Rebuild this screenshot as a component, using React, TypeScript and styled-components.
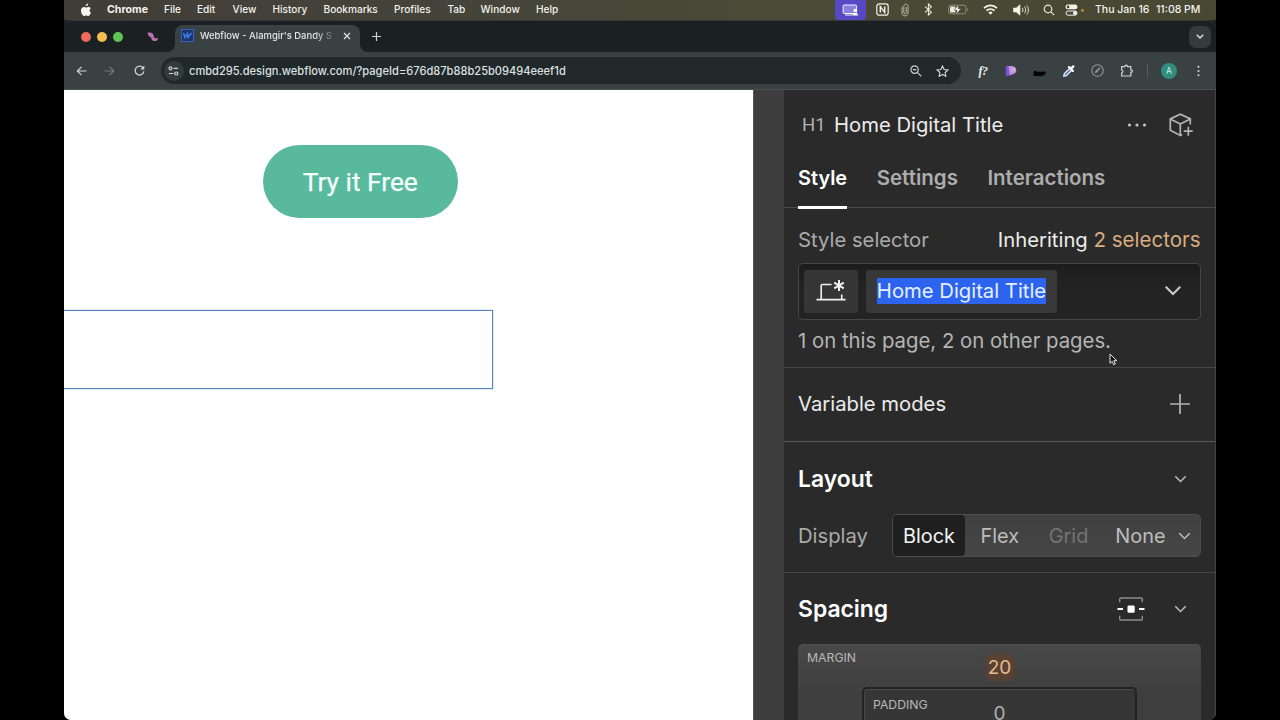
import React from "react";
import styled, { createGlobalStyle, css } from "styled-components";

const Global = createGlobalStyle`
  * { box-sizing: border-box; }
  html, body { margin: 0; background: #000; }
  body { font-family: Inter, "Liberation Sans", sans-serif; overflow: hidden; }
  svg { display: block; flex: none; }
`;

const Screen = styled.main`
  position: relative;
  width: 1152px;
  height: 720px;
  margin: 0 auto;
  display: flex;
  flex-direction: column;
  background: #1b2123;
  border-radius: 0 0 7px 7px;
  overflow: hidden;
`;

/* ---------- macOS menu bar ---------- */

const MenuBar = styled.header`
  flex: none;
  height: 20px;
  display: flex;
  align-items: flex-start;
  padding-left: 15.5px;
  background: linear-gradient(90deg, #403d37 0%, #45443a 35%, #4a4a37 60%, #474732 100%);
  color: #f2f2ec;
  font-size: 10.1px;
  font-weight: 500;
  line-height: 18px;
  white-space: nowrap;
`;

const MenuItem = styled.span<{ $w: number; $app?: boolean }>`
  flex: none;
  width: ${(p) => p.$w}px;
  height: 19px;
  ${(p) =>
    p.$app &&
    css`
      font-weight: 700;
      font-size: 10.6px;
      line-height: 19px;
    `}
`;

const Spacer = styled.div`
  flex: 1;
`;

const Slot = styled.span<{ $w: number; $ml?: number }>`
  flex: none;
  width: ${(p) => p.$w}px;
  height: 19px;
  margin-left: ${(p) => p.$ml ?? 0}px;
  display: flex;
  align-items: center;
  justify-content: center;
`;

const ShareBadge = styled(Slot)`
  background: #5748c4;
  height: 20px;
  border-radius: 0 0 4px 4px;
`;

const Clock = styled.span<{ $w: number }>`
  flex: none;
  width: ${(p) => p.$w}px;
  height: 19px;
  font-size: 10.5px;
  line-height: 19px;
`;

/* ---------- Chrome tab strip ---------- */

const TabStrip = styled.div`
  flex: none;
  height: 32px;
  display: flex;
  align-items: center;
  padding: 0 5px 0 16.5px;
  border-top: 1px solid #33393a;
  border-radius: 7px 7px 0 0;
  background: #1b2123;
`;

const Lights = styled.div`
  display: flex;
  gap: 6px;
`;

const Light = styled.i<{ $c: string }>`
  width: 10px;
  height: 10px;
  border-radius: 50%;
  background: ${(p) => p.$c};
`;

const PinnedTab = styled.div`
  width: 52.5px;
  display: flex;
  padding-left: 24.5px;
`;

const ActiveTab = styled.div`
  position: relative;
  width: 185px;
  height: 27px;
  align-self: flex-end;
  display: flex;
  align-items: center;
  padding: 0 9px 6px 6px;
  border-radius: 8px 8px 0 0;
  background: #3a4143;
  &::before,
  &::after {
    content: "";
    position: absolute;
    bottom: 0;
    width: 7px;
    height: 7px;
  }
  &::before {
    left: -7px;
    background: radial-gradient(circle at 0 0, transparent 6.5px, #3a4143 7px);
  }
  &::after {
    right: -7px;
    background: radial-gradient(circle at 100% 0, transparent 6.5px, #3a4143 7px);
  }
`;

const Favicon = styled.span`
  width: 13px;
  height: 13px;
  display: grid;
  place-items: center;
  border: 1px solid #3163c4;
  background: #1d3568;
`;

const TabTitle = styled.span`
  width: 136px;
  margin-left: 6px;
  white-space: nowrap;
  font-size: 9.45px;
  font-weight: 500;
  line-height: 15px;
  color: #e3e6e6;
  mask-image: linear-gradient(90deg, #000 114px, transparent 138px);
`;

const TabClose = styled.span`
  margin-left: auto;
  display: flex;
`;

const NewTab = styled.span`
  margin-left: 11.5px;
  display: flex;
`;

const TabSearch = styled.span`
  width: 22px;
  height: 22px;
  display: grid;
  place-items: center;
  border-radius: 7px;
  background: #343b3d;
`;

/* ---------- Chrome toolbar ---------- */

const Toolbar = styled.div`
  flex: none;
  height: 38px;
  display: flex;
  align-items: center;
  background: #3a4143;
  border-bottom: 1px solid #4a5052;
  color: #d3d7d7;
`;

const ToolSlot = styled.span<{ $w: number }>`
  flex: none;
  width: ${(p) => p.$w}px;
  display: flex;
  align-items: center;
  justify-content: center;
`;

const Omnibox = styled.div`
  flex: none;
  width: 800px;
  height: 27px;
  display: flex;
  align-items: center;
  padding: 0 6px 0 2.5px;
  border-radius: 14px;
  background: #20282a;
`;

const SiteInfo = styled.span`
  width: 20px;
  height: 20px;
  display: grid;
  place-items: center;
  border-radius: 50%;
  background: #343b3d;
`;

const Url = styled.span`
  flex: 1;
  padding-left: 5.5px;
  font-size: 11.1px;
  line-height: 18px;
  font-weight: 450;
  color: #dde1e1;
`;

const ScriptMark = styled.span`
  font: italic 700 12px/14px "Liberation Serif", serif;
  letter-spacing: -0.5px;
  color: #eef0f0;
`;

const Divider = styled.i`
  width: 1px;
  height: 13px;
  background: #596061;
`;

const Avatar = styled.span`
  width: 16px;
  height: 16px;
  border-radius: 50%;
  background: #2f8f7c;
  color: #d5ece6;
  font-size: 8.5px;
  line-height: 16px;
  text-align: center;
`;

/* ---------- Designer workspace ---------- */

const Workspace = styled.div`
  flex: 1;
  min-height: 0;
  display: flex;
  background: #3e3e3e;
`;

const Canvas = styled.section`
  width: 689px;
  background: #fff;
  padding-top: 55px;
`;

const TryButton = styled.button`
  display: block;
  width: 194.5px;
  height: 73px;
  margin: 0 0 0 199px;
  padding: 0;
  border: 0;
  border-radius: 37px;
  background: #58b99d;
  color: #f4fffb;
  font: 400 26.3px/74px Roboto, "Liberation Sans", sans-serif;
  -webkit-text-stroke: 0.25px #f4fffb;
`;

const SelectedBlock = styled.div`
  width: 430px;
  height: 79px;
  margin: 92px 0 0 -1px;
  border: 1px solid #5585c0;
  box-shadow: 0 0 0 0.5px #5585c055;
`;

const Gutter = styled.div`
  width: 31px;
  border-left: 1px solid #565656;
  background: #3e3e3e;
`;

const Panel = styled.aside`
  position: relative;
  width: 432px;
  display: flex;
  flex-direction: column;
  background: #2a2a2a;
  border-right: 1px solid #444;
  color: #ececec;
  font-size: 20.25px;
  line-height: 26px;
  white-space: nowrap;
`;

const Row = styled.div<{ $h: number; $pr?: number; $pt?: number }>`
  flex: none;
  height: ${(p) => p.$h}px;
  display: flex;
  align-items: center;
  padding: ${(p) => p.$pt ?? 0}px ${(p) => p.$pr ?? 15}px 0 14px;
`;

const TagName = styled.span`
  width: 32px;
  margin-left: 4px;
  font: 400 18.5px/26px Roboto, "Liberation Sans", sans-serif;
  color: #b2b2b2;
`;

const Tabs = styled.nav`
  flex: none;
  height: 58px;
  display: flex;
  gap: 29.5px;
  padding-left: 14px;
  border-bottom: 1px solid #4a4a4a;
`;

const Tab = styled.a<{ $active?: boolean }>`
  height: 59px;
  padding-top: 14.5px;
  font-size: ${(p) => (p.$active ? 19.9 : 20.5)}px;
  font-weight: 600;
  color: ${(p) => (p.$active ? "#fff" : "#adadad")};
  border-bottom: 3px solid ${(p) => (p.$active ? "#fff" : "transparent")};
`;

const Muted = styled.span`
  color: #ababab;
`;

const Inherit = styled.span`
  margin-left: auto;
`;

const Orange = styled.span`
  color: #d9ae80;
  font-size: 20.5px;
`;

const SelectorField = styled.div`
  flex: none;
  height: 57px;
  margin: 0 14px;
  padding: 0 18px 1px 5px;
  display: flex;
  align-items: center;
  border: 1px solid #464646;
  border-radius: 5px;
  background: linear-gradient(#1c1c1c, #232323 40%);
`;

const StateButton = styled.span`
  width: 54px;
  height: 43px;
  display: grid;
  place-items: center;
  border-radius: 3px;
  background: #363636;
`;

const ClassChip = styled.span`
  width: 191px;
  height: 43px;
  margin-left: 8px;
  display: grid;
  place-items: center;
  border-radius: 3px;
  background: #383838;
`;

const SelectedText = styled.span`
  height: 26px;
  background: #2c64f0;
  color: #e4f0ff;
`;

const Usage = styled.div`
  flex: none;
  height: 48px;
  padding: 8px 14px 0;
  border-bottom: 1px solid #464646;
  font-size: 20.33px;
  color: #b5b5b5;
`;

const Section = styled.section<{ $thick?: boolean }>`
  flex: none;
  padding-bottom: ${(p) => (p.$thick ? 1 : 16)}px;
  border-bottom: ${(p) => (p.$thick ? 1.5 : 1)}px solid ${(p) => (p.$thick ? "#585858" : "#464646")};
`;

const Heading = styled.h2`
  margin: 0;
  font-size: 22.9px;
  font-weight: 600;
  line-height: 28px;
  color: #fff;
`;

const Right = styled.span`
  margin-left: auto;
  display: flex;
  align-items: center;
`;

const Segmented = styled.div`
  width: 309px;
  height: 43px;
  margin-left: auto;
  display: flex;
  border: 1px solid #4d4d4d;
  border-radius: 5px;
  background: linear-gradient(#404040, #464646);
`;

const Segment = styled.span<{ $w: number; $state?: "on" | "off" }>`
  width: ${(p) => p.$w}px;
  display: flex;
  align-items: center;
  justify-content: center;
  font-size: 19.9px;
  color: ${(p) => (p.$state === "on" ? "#f4f4f4" : p.$state === "off" ? "#747474" : "#bcbcbc")};
  ${(p) =>
    p.$state === "on" &&
    css`
      background: #1f1f1f;
      border-radius: 4px;
    `}
`;

const MenuCaret = styled(Segment)`
  padding-top: 2px;
`;

const MarginBox = styled.div`
  height: 220px;
  width: 403px;
  margin-left: 14px;
  border-radius: 5px;
  border-top: 1px solid #505050;
  background: linear-gradient(#484848 0, #3f3f3f 50px);
`;

const BoxHead = styled.div<{ $h: number; $pad: string }>`
  position: relative;
  height: ${(p) => p.$h}px;
  padding: ${(p) => p.$pad};
  font-size: 12.25px;
  line-height: 16px;
  color: #b9b9b9;
`;

const MarginValue = styled.span`
  position: absolute;
  left: 50%;
  top: 10px;
  height: 24px;
  padding: 0 1px;
  transform: translateX(-50%);
  border-radius: 4px;
  background: #594233;
  box-shadow: 0 0 4px 1px #594233;
  color: #e6b98f;
  font-size: 19px;
  line-height: 25px;
`;

const PaddingValue = styled(MarginValue)`
  top: 13px;
  background: none;
  box-shadow: none;
  color: #b0b0b0;
  line-height: 24px;
`;

const PaddingBox = styled.div`
  width: 275px;
  height: 100px;
  margin: 0 auto;
  border: 2px solid #222;
  border-radius: 5px;
  background: #363636;
  box-shadow: inset 0 1px #4b4b4b, inset 1px 0 #474747;
`;

const Cursor = styled.svg`
  position: absolute;
  left: 325px;
  top: 263px;
`;

/* ---------- Icons ---------- */

type ChevronProps = { w: number; sw?: number; color?: string };
const Chevron = ({ w, sw = 1.6, color = "#b9b9b9" }: ChevronProps) => (
  <svg width={w} height={w * 0.62} viewBox="0 0 16 10" fill="none" stroke={color} strokeWidth={(sw * 16) / w}>
    <path d="M1.5 1.5 8 8l6.5-6.5" />
  </svg>
);

const Apple = () => (
  <svg width="12" height="14" viewBox="0 0 24 28" fill="#f5f5f0">
    <path d="M16.3 1c.2 2.700-2 5.600-4.900 5.600C11.200 3.900 13.600 1.300 16.300 1zM21.900 19.400c-1.100 2.900-3.200 6.400-5.500 6.400-1.500 0-2.200-1-4-1-1.900 0-2.700 1-4.100 1C5.500 25.800 2 20.300 2 15.400c0-4.600 2.900-7.200 5.900-7.200 1.900 0 3.200 1.200 4.500 1.200 1.200 0 2.900-1.300 5-1.300 1.500 0 3.300.8 4.300 2.300-3.700 2.300-3.200 7.400.2 9z" />
  </svg>
);

const ScreenShare = () => (
  <svg width="17" height="14" viewBox="0 0 17 14">
    <rect x="1.100" y="2" width="13.500" height="8.500" rx="1" fill="#8b80dd" stroke="#f1efff" strokeWidth="1" />
    <path d="M3 12h7" stroke="#f1efff" />
    <circle cx="13.200" cy="7.500" r="1.800" fill="#fff" />
    <path d="M10.200 12.600c0-3.600 6-3.600 6 0z" fill="#fff" />
  </svg>
);

const Notion = () => (
  <svg width="13" height="13" viewBox="0 0 13 13" fill="none" stroke="#f0f0e8">
    <rect x=".8" y=".8" width="11.400" height="11.400" rx="2.500" strokeWidth="1.200" />
    <path d="M4.300 9.600V3.600l4.400 5.800V3.400" strokeWidth="1.400" />
  </svg>
);

const Clip = () => (
  <svg width="8" height="14" viewBox="0 0 8 14" fill="none" stroke="#b9b9a8" strokeWidth="1">
    <path d="M1 4v6.200c0 3.600 6 3.600 6 0V3.200c0-2.700-4.200-2.700-4.200 0v6.400c0 1.500 2.400 1.500 2.400 0V4" />
  </svg>
);

const Bluetooth = () => (
  <svg width="9" height="13" viewBox="0 0 9 13" fill="none" stroke="#e8e8de" strokeWidth="1.100">
    <path d="m1 3.600 6.400 5.600L4.400 12V1l3 2.800L1 9.400" />
  </svg>
);

const Battery = () => (
  <svg width="21" height="11" viewBox="0 0 21 11">
    <rect x=".6" y="1.200" width="17.300" height="8.600" rx="2.400" fill="none" stroke="#8f8f80" />
    <path d="M19.300 4v3c1.400-.4 1.400-2.600 0-3z" fill="#8f8f80" />
    <rect x="2" y="2.600" width="5.500" height="5.800" rx="1" fill="#e9e9df" />
    <path d="M10.800.4 6.200 6.100h2.900l-1 4.500 4.800-5.900H10z" fill="#fff" stroke="#474732" strokeWidth=".5" />
  </svg>
);

const Wifi = () => (
  <svg width="15" height="11" viewBox="0 0 15 11" fill="none" stroke="#f4f4ec" strokeWidth="1.700">
    <path d="M1 4.200c3.700-3.700 9.300-3.700 13 0M3.400 6.700c2.400-2.300 5.800-2.300 8.200 0" />
    <path d="M5.300 8.400c1.300-1.200 3.100-1.200 4.400 0L7.500 10.700z" fill="#f4f4ec" stroke="none" />
  </svg>
);

const Volume = () => (
  <svg width="17" height="12" viewBox="0 0 17 12" fill="none" stroke="#dcdcd0" strokeWidth="1">
    <path d="M.5 4h2.700L7 .8v10.400L3.200 8H.5z" fill="#f4f4ec" stroke="#f4f4ec" strokeWidth=".6" />
    <path d="M9.300 4c.9 1.200.9 2.800 0 4M11.500 2.700c1.500 2 1.500 4.600 0 6.600M13.700 1.400c2.200 2.800 2.200 6.400 0 9.200" />
  </svg>
);

const Spotlight = () => (
  <svg width="12" height="12" viewBox="0 0 12 12" fill="none" stroke="#e8e8de" strokeWidth="1.200">
    <circle cx="5" cy="5" r="3.800" />
    <path d="m7.800 7.800 3.400 3.400" />
  </svg>
);

const ControlCenter = () => (
  <svg width="20" height="12" viewBox="0 0 20 12">
    <rect x=".5" y=".5" width="12" height="4.800" rx="2.400" fill="#f2f2ea" />
    <circle cx="3.100" cy="2.900" r="1.300" fill="#474732" />
    <rect x="1" y="7" width="11" height="4.200" rx="2.100" fill="none" stroke="#f2f2ea" />
    <circle cx="10" cy="9.100" r="2" fill="#f2f2ea" />
    <circle cx="17.500" cy="6.400" r="1.600" fill="#b5803c" />
  </svg>
);

const Petal = () => (
  <svg width="12" height="12" viewBox="0 0 12 12" fill="#b673b4">
    <path d="M.6 1.600C5 1 7 2.500 6.800 6.200c.8 1.200 2.600 1 4.400 1-.4 2.400-2.700 3.200-4.600 2.700C4.500 9.400 4.300 8 4.300 6.600 2 6 .6 4.300.6 1.600z" />
  </svg>
);

const Arrow = ({ right }: { right?: boolean }) => (
  <svg width="11" height="10" viewBox="0 0 11 10" fill="none" stroke={right ? "#767d7e" : "#cfd3d3"} strokeWidth="1.200">
    <path d={right ? "M.5 5h9M5.500.8 9.700 5 5.500 9.200" : "M10.500 5h-9M5.500.8 1.300 5l4.200 4.200"} />
  </svg>
);

const Reload = () => (
  <svg width="11" height="11" viewBox="0 0 11 11" fill="none" stroke="#cfd3d3" strokeWidth="1.300">
    <path d="M9.300 3.200A4.400 4.400 0 1 0 9.900 6.400" />
    <path d="M10.300.6v3.900H6.400z" fill="#cfd3d3" stroke="none" />
  </svg>
);

const Tune = () => (
  <svg width="11" height="10" viewBox="0 0 11 10" fill="none" stroke="#d3d7d7" strokeWidth="1.200">
    <circle cx="2.500" cy="2.300" r="1.500" />
    <path d="M5.500 2.300H10M1 7.500h4.300" />
    <circle cx="8.300" cy="7.500" r="1.500" />
  </svg>
);

const ZoomOut = () => (
  <svg width="12" height="12" viewBox="0 0 12 12" fill="none" stroke="#cdd1d1" strokeWidth="1.200">
    <circle cx="4.600" cy="4.600" r="3.700" />
    <path d="m7.300 7.300 4 4M2.900 4.600h3.400" />
  </svg>
);

const Star = () => (
  <svg width="13" height="12" viewBox="0 0 13 12" fill="none" stroke="#d3d7d7" strokeWidth="1.100">
    <path d="m6.500 1 1.600 3.500 3.800.4-2.800 2.600.8 3.800-3.400-1.900-3.400 1.900.8-3.800L1.100 4.900l3.800-.4z" />
  </svg>
);

const PurpleExt = () => (
  <svg width="12" height="12" viewBox="0 0 12 12">
    <path d="M.8 1v10.200l5.700-1V1z" fill="#7a52dc" />
    <path d="M3.500 1.200C9 .2 11.500 2.800 11.300 5.600c-.2 3-3.200 4.300-6.800 4z" fill="#c394e0" />
    <circle cx="8.500" cy="4.500" r="2.200" fill="#dba6cf" />
  </svg>
);

const DarkExt = () => (
  <svg width="14" height="12" viewBox="0 0 14 12" fill="#050505">
    <path d="M.6 11V7.200L1.800 5l1.400 1.600c3 .4 5.400.2 8-.4l2.400 2-1.800.3v1.400l-2.300.5-.7.800z" />
    <path d="m1 4.800.8-1.300.8 1.300z" fill="#a34a35" />
  </svg>
);

const Dropper = () => (
  <svg width="14" height="14" viewBox="0 0 14 14" fill="none">
    <path d="M1.700 12.300 2.300 9.600 8 4l2 2-5.600 5.700z" fill="#4f7ec4" stroke="#f0f4fa" strokeWidth="1.200" />
    <path d="m7 3.200 3.800 3.800M9 4.800l2.300-2.400" stroke="#f5f8fb" strokeWidth="2.400" strokeLinecap="round" />
  </svg>
);

const Compass = () => (
  <svg width="13" height="13" viewBox="0 0 13 13" fill="none" stroke="#8e9596">
    <circle cx="6.500" cy="6.500" r="5.700" strokeWidth="1.100" />
    <path d="m4.300 9 .6-2.200L8.700 3.500l.4.500-3 4z" fill="#8e9596" strokeWidth=".7" />
  </svg>
);

const Puzzle = () => (
  <svg width="14" height="13" viewBox="0 0 14 13" fill="none" stroke="#cfd3d3" strokeWidth="1.200">
    <path d="M1.600 2.600h3.300c0-2 2.600-2 2.600 0h3.300v3.200c2.200 0 2.200 2.600 0 2.600V12H1.600V9c1.800-.2 1.800-3 0-3.200z" />
  </svg>
);

const Kebab = () => (
  <svg width="3" height="12" viewBox="0 0 3 12" fill="#d3d7d7">
    <circle cx="1.500" cy="1.700" r="1.050" />
    <circle cx="1.500" cy="6" r="1.050" />
    <circle cx="1.500" cy="10.300" r="1.050" />
  </svg>
);

const Dots = () => (
  <svg width="20" height="4" viewBox="0 0 20 4" fill="#c4c4c4">
    <circle cx="2.500" cy="2" r="1.600" />
    <circle cx="10" cy="2" r="1.600" />
    <circle cx="17.500" cy="2" r="1.600" />
  </svg>
);

const CubePlus = () => (
  <svg width="24" height="24" viewBox="0 0 24 24" fill="none" stroke="#b4b4b4" strokeWidth="1.700">
    <path d="M21.300 11.600V5.900L11.300 1.200 1.300 5.900v11.300l10 5.200V11L1.300 5.900M11.300 11l10-5.100M11.300 22.400l1.900-1" />
    <path d="M19.300 13.800v8.900M14.800 18.200h8.900" />
  </svg>
);

const Breakpoint = () => (
  <svg width="30" height="24" viewBox="0 0 30 24" fill="none" stroke="#f0f0f0" strokeWidth="1.600">
    <path d="M.5 20.600h29M5.200 20.500V6.500q0-1 1-1h9.300M25.700 20.500v-5" />
    <path d="M23 1v11M18.200 3.700l9.600 5.600M27.800 3.700l-9.600 5.600" strokeWidth="2" />
  </svg>
);

const Plus = ({ s, sw, color }: { s: number; sw: number; color: string }) => (
  <svg width={s} height={s} viewBox={`0 0 ${s} ${s}`} stroke={color} strokeWidth={sw}>
    <path d={`M${s / 2} 0v${s}M0 ${s / 2}h${s}`} />
  </svg>
);

const SpacingIcon = () => (
  <svg width="28" height="24" viewBox="0 0 28 24" fill="none" stroke="#8d8d8d" strokeWidth="1.400">
    <path d="M2.700 5.200V1.900q0-.9.900-.9h20.800q.9 0 .9.900v3.300M2.700 18.800v3.300q0 .9.900.9h20.800q.9 0 .9-.9v-3.300" />
    <path d="M.5 12H6M22 12h5.500" stroke="#fff" strokeWidth="1.800" />
    <rect x="10.500" y="8.500" width="7.200" height="7.200" rx="1.300" fill="#fff" stroke="none" />
  </svg>
);

const menus: [string, number][] = [
  ["File", 33], ["Edit", 35.5], ["View", 40], ["History", 51], ["Bookmarks", 70.5],
  ["Profiles", 53.5], ["Tab", 33], ["Window", 55.5], ["Help", 30],
];

export default function App() {
  return (
    <Screen>
      <Global />
      <MenuBar>
        <MenuItem $w={27.5}>
          <Slot $w={12}><Apple /></Slot>
        </MenuItem>
        <MenuItem $w={57} $app>Chrome</MenuItem>
        {menus.map(([label, w]) => (
          <MenuItem key={label} $w={w}>{label}</MenuItem>
        ))}
        <Spacer />
        <ShareBadge $w={31}><ScreenShare /></ShareBadge>
        <Slot $w={16} $ml={8}><Notion /></Slot>
        <Slot $w={14} $ml={8}><Clip /></Slot>
        <Slot $w={14} $ml={9}><Bluetooth /></Slot>
        <Slot $w={22} $ml={12}><Battery /></Slot>
        <Slot $w={16} $ml={13}><Wifi /></Slot>
        <Slot $w={20} $ml={13}><Volume /></Slot>
        <Slot $w={14} $ml={11}><Spotlight /></Slot>
        <Slot $w={20} $ml={9}><ControlCenter /></Slot>
        <Slot $w={10} />
        <Clock $w={61}>Thu Jan 16</Clock>
        <Clock $w={60}>11:08 PM</Clock>
      </MenuBar>

      <TabStrip>
        <Lights>
          <Light $c="#ec6a5f" />
          <Light $c="#f4bf50" />
          <Light $c="#61c455" />
        </Lights>
        <PinnedTab><Petal /></PinnedTab>
        <ActiveTab>
          <Favicon>
            <svg width="9" height="7" viewBox="0 0 9 7" fill="none" stroke="#3f78e6" strokeWidth="1.600">
              <path d="M.5 1l1.500 4.500L4.500 1.500 5 5.500 8.500 1" />
            </svg>
          </Favicon>
          <TabTitle>Webflow - Alamgir's Dandy S</TabTitle>
          <TabClose>
            <svg width="8" height="8" viewBox="0 0 8 8" stroke="#dde0e0" strokeWidth="1.300">
              <path d="m1 1 6 6M7 1 1 7" />
            </svg>
          </TabClose>
        </ActiveTab>
        <NewTab><Plus s={9} sw={1.2} color="#cdd1d1" /></NewTab>
        <Spacer />
        <TabSearch><Chevron w={8} sw={1.4} color="#e2e5e5" /></TabSearch>
      </TabStrip>

      <Toolbar>
        <ToolSlot $w={35}><Arrow /></ToolSlot>
        <ToolSlot $w={21}><Arrow right /></ToolSlot>
        <ToolSlot $w={38}><Reload /></ToolSlot>
        <ToolSlot $w={3} />
        <Omnibox>
          <SiteInfo><Tune /></SiteInfo>
          <Url>cmbd295.design.webflow.com/?pageId=676d87b88b25b09494eeef1d</Url>
          <ToolSlot $w={26}><ZoomOut /></ToolSlot>
          <ToolSlot $w={26}><Star /></ToolSlot>
        </Omnibox>
        <ToolSlot $w={8} />
        <ToolSlot $w={28}><ScriptMark>f?</ScriptMark></ToolSlot>
        <ToolSlot $w={28}><PurpleExt /></ToolSlot>
        <ToolSlot $w={29}><DarkExt /></ToolSlot>
        <ToolSlot $w={29}><Dropper /></ToolSlot>
        <ToolSlot $w={28}><Compass /></ToolSlot>
        <ToolSlot $w={31}><Puzzle /></ToolSlot>
        <ToolSlot $w={11}><Divider /></ToolSlot>
        <ToolSlot $w={32}><Avatar>A</Avatar></ToolSlot>
        <ToolSlot $w={27}><Kebab /></ToolSlot>
      </Toolbar>

      <Workspace>
        <Canvas>
          <TryButton>Try it Free</TryButton>
          <SelectedBlock />
        </Canvas>
        <Gutter />
        <Panel>
          <Row $h={60} $pr={22} $pt={9}>
            <TagName>H1</TagName>
            <span>Home Digital Title</span>
            <Right>
              <Dots />
              <ToolSlot $w={22} />
              <CubePlus />
            </Right>
          </Row>
          <Tabs>
            <Tab $active>Style</Tab>
            <Tab>Settings</Tab>
            <Tab>Interactions</Tab>
          </Tabs>
          <Row $h={55} $pr={14.5} $pt={9}>
            <Muted>Style selector</Muted>
            <Inherit>Inheriting <Orange>2 selectors</Orange></Inherit>
          </Row>
          <SelectorField>
            <StateButton><Breakpoint /></StateButton>
            <ClassChip><SelectedText>Home Digital Title</SelectedText></ClassChip>
            <Right><Chevron w={18} sw={2.2} color="#c8c8c8" /></Right>
          </SelectorField>
          <Usage>1 on this page, 2 on other pages.</Usage>
          <Section $thick>
            <Row $h={72} $pr={25}>
              <span>Variable modes</span>
              <Right><Plus s={20} sw={1.7} color="#b4b4b4" /></Right>
            </Row>
          </Section>
          <Section>
            <Row $h={73} $pr={28.5} $pt={1}>
              <Heading>Layout</Heading>
              <Right><Chevron w={13} /></Right>
            </Row>
            <Row $h={41} $pr={14}>
              <Muted>Display</Muted>
              <Segmented>
                <Segment $w={72} $state="on">Block</Segment>
                <Segment $w={69.5}>Flex</Segment>
                <Segment $w={68} $state="off">Grid</Segment>
                <Segment $w={76}>None</Segment>
                <MenuCaret $w={12}><Chevron w={13} /></MenuCaret>
              </Segmented>
            </Row>
          </Section>
          <Row $h={71} $pr={28.5} $pt={1}>
            <Heading>Spacing</Heading>
            <Right>
              <SpacingIcon />
              <ToolSlot $w={29} />
              <Chevron w={13} />
            </Right>
          </Row>
          <MarginBox>
            <BoxHead $h={42} $pad="5px 9px">
              MARGIN
              <MarginValue>20</MarginValue>
            </BoxHead>
            <PaddingBox>
              <BoxHead $h={40} $pad="8px 9px">
                PADDING
                <PaddingValue>0</PaddingValue>
              </BoxHead>
            </PaddingBox>
          </MarginBox>
          <Cursor width="9" height="13" viewBox="0 0 9 13">
            <path d="M1 1v9.300l2.200-2 1.500 3.400 1.600-.7-1.500-3.300h3z" fill="#111" stroke="#e8e8e8" strokeWidth="1" />
          </Cursor>
        </Panel>
      </Workspace>
    </Screen>
  );
}
